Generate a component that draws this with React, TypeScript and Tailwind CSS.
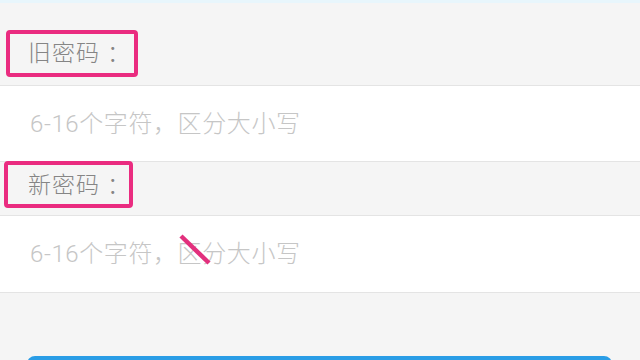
import React from "react";

const font = { fontFamily: 'Roboto, "Noto Sans CJK SC", sans-serif' };

function Label({ text, box }: { text: string; box: string }) {
  return (
    <div className="relative inline-block">
      <span className="text-[23px] leading-[24px] font-light text-[#858585] tracking-[1px]">
        {text}
        <span className="ml-[7px]">：</span>
      </span>
      <span className={`absolute rounded-[4px] border-[4px] border-[#ea2c80] ${box}`} />
    </div>
  );
}

function Placeholder() {
  return (
    <span className="text-[24px] font-light text-[#c6c6c6] tracking-[0.6px]">6-16个字符，区分大小写</span>
  );
}

export default function App() {
  return (
    <div className="w-[640px] h-[360px] overflow-hidden bg-[#f5f5f5] flex flex-col" style={font}>
      <div className="h-[3px] bg-[#e8f6fc] shrink-0" />
      <div className="h-[82px] shrink-0 pl-[28px] pt-[39px]">
        <Label text="旧密码" box="left-[-22px] top-[-12px] w-[132px] h-[47px]" />
      </div>
      <div className="h-px bg-[#e4e4e4] shrink-0" />
      <div className="h-[75px] shrink-0 bg-white flex items-center pl-[30px]">
        <Placeholder />
      </div>
      <div className="h-px bg-[#e4e4e4] shrink-0" />
      <div className="h-[53px] shrink-0 pl-[28px] pt-[12px]">
        <Label text="新密码" box="left-[-24px] top-[-13px] w-[129px] h-[47px]" />
      </div>
      <div className="h-px bg-[#e4e4e4] shrink-0" />
      <div className="relative h-[76px] shrink-0 bg-white flex items-center pl-[30px]">
        <Placeholder />
        <svg className="absolute left-[176px] top-[16px]" width="40" height="40" viewBox="0 0 40 40">
          <line x1="5" y1="4" x2="33" y2="31" stroke="#e2307d" strokeWidth="4.5" strokeLinecap="butt" />
        </svg>
      </div>
      <div className="h-px bg-[#e4e4e4] shrink-0" />
      <div className="flex-1 pt-[63px] px-[27px]">
        <div className="h-[44px] w-[585px] rounded-[8px] bg-[#2a9de6]" />
      </div>
    </div>
  );
}
